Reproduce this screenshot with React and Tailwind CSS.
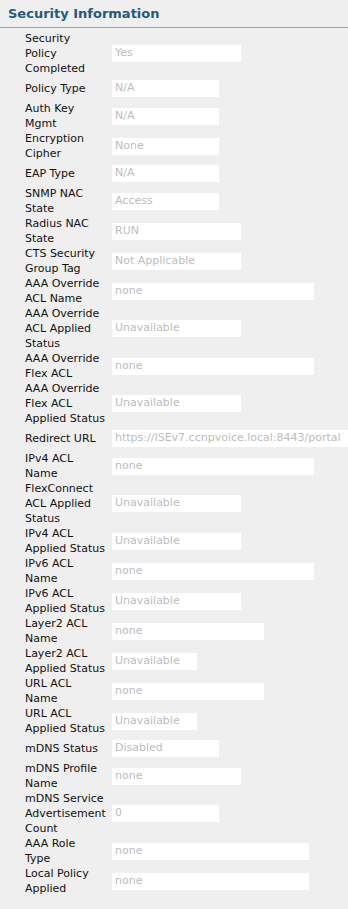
const rows = [
  { label: ['Security', 'Policy', 'Completed'], value: 'Yes', w: 'w-[129px]' },
  { label: ['Policy Type'], value: 'N/A', w: 'w-[107px]' },
  { label: ['Auth Key', 'Mgmt'], value: 'N/A', w: 'w-[107px]' },
  { label: ['Encryption', 'Cipher'], value: 'None', w: 'w-[107px]' },
  { label: ['EAP Type'], value: 'N/A', w: 'w-[107px]' },
  { label: ['SNMP NAC', 'State'], value: 'Access', w: 'w-[107px]' },
  { label: ['Radius NAC', 'State'], value: 'RUN', w: 'w-[129px]' },
  { label: ['CTS Security', 'Group Tag'], value: 'Not Applicable', w: 'w-[129px]' },
  { label: ['AAA Override', 'ACL Name'], value: 'none', w: 'w-[202px]' },
  { label: ['AAA Override', 'ACL Applied', 'Status'], value: 'Unavailable', w: 'w-[129px]' },
  { label: ['AAA Override', 'Flex ACL'], value: 'none', w: 'w-[202px]' },
  { label: ['AAA Override', 'Flex ACL', 'Applied Status'], value: 'Unavailable', w: 'w-[129px]' },
  { label: ['Redirect URL'], value: 'https://ISEv7.ccnpvoice.local:8443/portal', w: 'w-[236px]' },
  { label: ['IPv4 ACL', 'Name'], value: 'none', w: 'w-[202px]' },
  { label: ['FlexConnect', 'ACL Applied', 'Status'], value: 'Unavailable', w: 'w-[129px]' },
  { label: ['IPv4 ACL', 'Applied Status'], value: 'Unavailable', w: 'w-[129px]' },
  { label: ['IPv6 ACL', 'Name'], value: 'none', w: 'w-[202px]' },
  { label: ['IPv6 ACL', 'Applied Status'], value: 'Unavailable', w: 'w-[129px]' },
  { label: ['Layer2 ACL', 'Name'], value: 'none', w: 'w-[152px]' },
  { label: ['Layer2 ACL', 'Applied Status'], value: 'Unavailable', w: 'w-[85px]' },
  { label: ['URL ACL', 'Name'], value: 'none', w: 'w-[152px]' },
  { label: ['URL ACL', 'Applied Status'], value: 'Unavailable', w: 'w-[85px]' },
  { label: ['mDNS Status'], value: 'Disabled', w: 'w-[107px]' },
  { label: ['mDNS Profile', 'Name'], value: 'none', w: 'w-[129px]' },
  { label: ['mDNS Service', 'Advertisement', 'Count'], value: '0', w: 'w-[107px]' },
  { label: ['AAA Role', 'Type'], value: 'none', w: 'w-[197px]' },
  { label: ['Local Policy', 'Applied'], value: 'none', w: 'w-[197px]' },
]

function Field({ label, value, w }) {
  return (
    <div className="flex items-center min-h-[25px] pl-[25px]">
      <div className="w-[87px] shrink-0 text-[11px] leading-[15px] text-[#111]">
        {label.map((line) => (
          <div key={line} className="whitespace-nowrap">{line}</div>
        ))}
      </div>
      <div
        className={`${w} shrink-0 h-[17px] bg-white flex items-center pl-[3px]
                    text-[11px] text-[#bdbdbd] whitespace-nowrap overflow-hidden`}
      >
        {value}
      </div>
    </div>
  )
}

export default function App() {
  return (
    <div
      className="w-[348px] min-h-[909px] bg-[#efefef] overflow-hidden"
      style={{ fontFamily: '"DejaVu Sans", Verdana, sans-serif' }}
    >
      {/* Title */}
      <div className="h-[28px] pl-[8px] pt-[5px] border-b border-[#9ba7b0]">
        <h2 className="text-[13px] leading-[18px] font-bold text-[#245a7c] whitespace-nowrap">
          Security Information
        </h2>
      </div>

      {/* Fields */}
      <div className="pt-[3px]">
        {rows.map((r) => (
          <Field key={r.label.join(' ')} {...r} />
        ))}
      </div>
    </div>
  )
}
